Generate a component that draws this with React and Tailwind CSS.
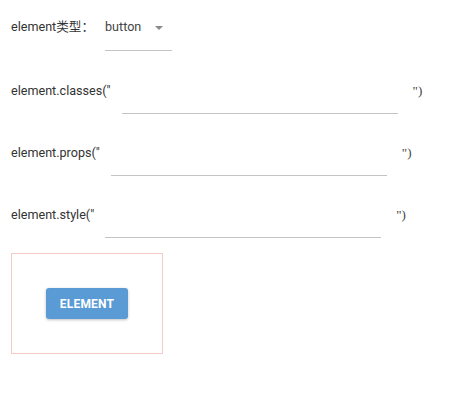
import React from 'react';

const fields = [
    { label: 'element.classes("', mb: 'mb-[29px]' },
    { label: 'element.props("', mb: 'mb-[29px]' },
    { label: 'element.style("', mb: 'mb-[15px]' },
];

const App = () => {
    return (
        <div className="min-h-[409px] bg-white pl-[11px] pt-[17px] text-[12.6px] text-[#333] font-['Roboto','Liberation_Sans','Noto_Sans_CJK_SC',sans-serif]">
            <div className="flex items-start mb-[30px]">
                <div className="leading-[20px]">element类型：</div>
                <div className="ml-[11px] flex h-[34px] w-[67px] items-start justify-between border-b border-[#c4c4c4]">
                    <span className="leading-[20px] text-[#444]">button</span>
                    <span className="mt-[9px] mr-[9px] h-0 w-0 border-x-[4px] border-t-[4px] border-x-transparent border-t-[#8a8a8a]"></span>
                </div>
            </div>

            {fields.map((f) => (
                <div key={f.label} className={`flex items-start ${f.mb}`}>
                    <div className="leading-[20px]">{f.label}</div>
                    <div className="ml-[11px] h-[33px] w-[276px] border-b border-[#c4c4c4]"></div>
                    <div className="ml-[15px] leading-[20px] font-['Liberation_Serif',serif] text-[13px] text-[#444]">")</div>
                </div>
            ))}

            <div className="inline-block border border-[#f7caca] p-[34px]">
                <button className="h-[31px] w-[82px] rounded-[3px] bg-[#5b9bd5] text-[12px] font-bold tracking-[0.2px] text-white shadow-[0_1px_3px_rgba(0,0,0,0.25)]">
                    ELEMENT
                </button>
            </div>
        </div>
    );
};

export default App;
